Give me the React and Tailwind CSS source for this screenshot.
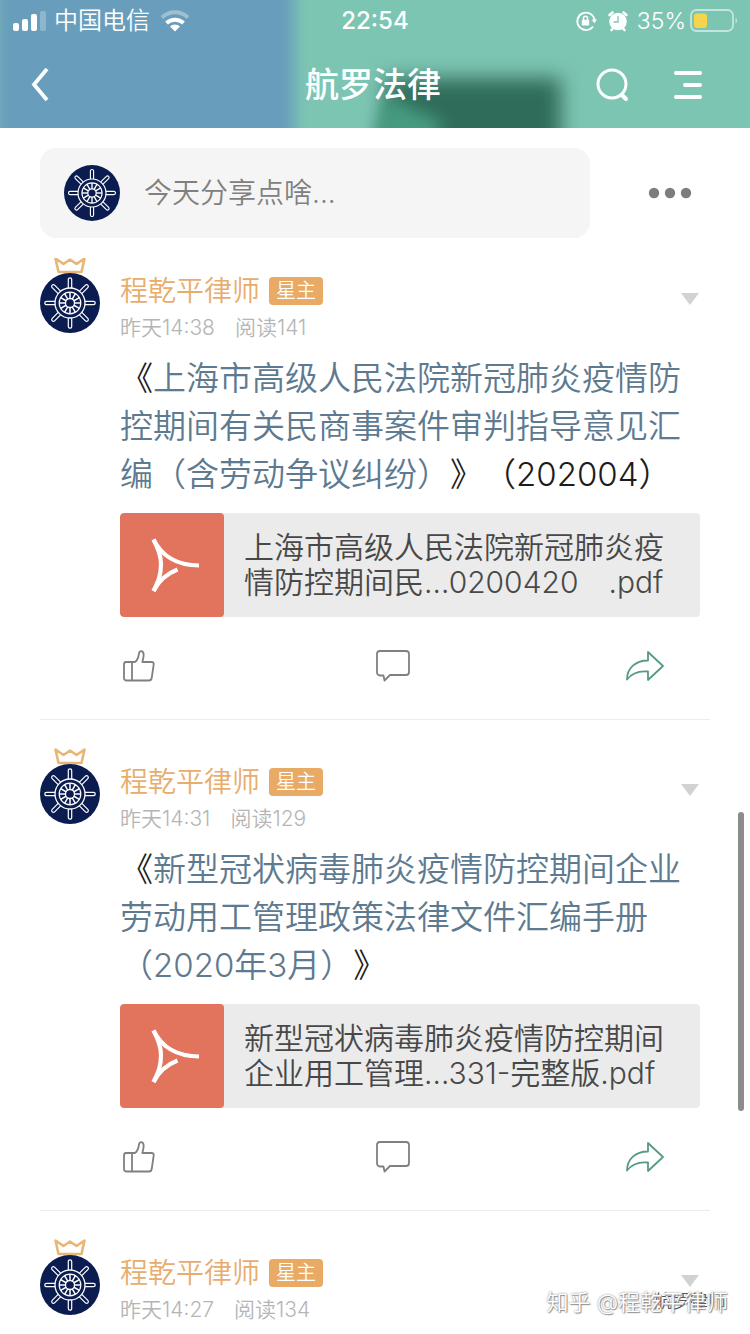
import React from 'react';

const posts = [
  {
    id: 1,
    author: '程乾平律师',
    time: '昨天14:38',
    reads: '阅读141',
    link: '上海市高级人民法院新冠肺炎疫情防控期间有关民商事案件审判指导意见汇编（含劳动争议纠纷）',
    suffix: '（202004）',
    file: ['上海市高级人民法院新冠肺炎疫', '情防控期间民…0200420\u3000.pdf'],
  },
  {
    id: 2,
    author: '程乾平律师',
    time: '昨天14:31',
    reads: '阅读129',
    link: '新型冠状病毒肺炎疫情防控期间企业劳动用工管理政策法律文件汇编手册（2020年3月）',
    suffix: '',
    file: ['新型冠状病毒肺炎疫情防控期间', '企业用工管理…331-完整版.pdf'],
  },
  { id: 3, author: '程乾平律师', time: '昨天14:27', reads: '阅读134' },
];

const Wheel = ({ className }) => (
  <svg viewBox="0 0 60 60" className={className} fill="none" stroke="#fff">
    <circle cx="30" cy="30" r="30" fill="#0b1c50" stroke="none" />
    {[0, 45, 90, 135, 180, 225, 270, 315].map((a) => (
      <path key={a} transform={`rotate(${a} 30 30)`} d="M28.3 15V6.500a1.700 1.700 0 0 1 3.400 0V15" strokeWidth="1.200" />
    ))}
    <circle cx="30" cy="30" r="15" strokeWidth="1.300" />
    <circle cx="30" cy="30" r="10.800" strokeWidth="1.200" />
    <circle cx="30" cy="30" r="4.500" strokeWidth="1.300" />
    {[0, 30, 60, 90, 120, 150, 180, 210, 240, 270, 300, 330].map((a) => (
      <path key={a} transform={`rotate(${a} 30 30)`} d="M30 25.5v-6.3" strokeWidth="1.500" />
    ))}
  </svg>
);

const Crown = () => (
  <svg viewBox="0 0 32 20" className="absolute -top-[17px] left-3.5 h-5 w-8" fill="none" stroke="#eab676" strokeWidth="2.600" strokeLinejoin="round" strokeLinecap="round">
    <path d="M1.500 2.500L4.500 16h23l3-13.500-8 5.500L16 3.500 9.500 8z" />
  </svg>
);

const StatusBar = () => (
  <div className="grid h-[42px] grid-cols-3 items-center px-3 text-[23px] leading-8">
    <div className="flex items-center">
      <svg viewBox="0 0 34 20" className="h-5 w-[34px]" fill="#fff">
        <rect x="1" y="12" width="6" height="8" rx="2" />
        <rect x="10" y="8" width="6" height="12" rx="2" />
        <rect x="19" y="3" width="6" height="17" rx="2" />
        <rect x="28" y="0" width="6" height="20" rx="2" opacity=".25" />
      </svg>
      <span className="ml-2 text-[24px]">中国电信</span>
      <svg viewBox="0 0 30 22" className="ml-2.5 h-[22px] w-[30px]" fill="none" stroke="#fff" strokeWidth="4">
        <path d="M2 7.500a19 19 0 0 1 26 0" opacity=".35" />
        <path d="M6.500 13a12.500 12.500 0 0 1 17 0" />
        <path d="M15 21.500l-5-5a7 7 0 0 1 10 0z" fill="#fff" stroke="none" />
      </svg>
    </div>
    <span className="text-center text-[24px] font-medium">22:54</span>
    <div className="flex items-center justify-end">
      <svg viewBox="0 0 22 22" className="h-[22px] w-[22px]" fill="none" stroke="#fff" strokeWidth="1.800">
        <path d="M18 16.500A8.700 8.700 0 1 1 19.600 10" />
        <path d="M16.700 9.500h5.300l-2.600 3.800z" fill="#fff" stroke="none" />
        <rect x="6.800" y="9.800" width="7.400" height="5.600" rx="1" fill="#fff" stroke="none" />
        <path d="M8.500 10V8.300a2 2 0 0 1 4 0V10" strokeWidth="1.500" />
      </svg>
      <svg viewBox="0 0 22 22" className="ml-2.5 h-[22px] w-[22px]" fill="none" stroke="#fff" strokeLinecap="round">
        <circle cx="11" cy="11.500" r="8.800" fill="#fff" stroke="none" />
        <path d="M2.500 5L5.500 2.500M19.500 5L16.500 2.500M4.500 20l1.800-2M17.500 20l-1.800-2" strokeWidth="2.600" />
        <path d="M11 6.500v5.500H7" stroke="#7cc5b2" strokeWidth="1.300" />
      </svg>
      <span className="ml-2">35%</span>
      <svg viewBox="0 0 48 24" className="ml-1 h-6 w-12">
        <rect x="1" y="1" width="42" height="21" rx="5.500" fill="none" stroke="#fff" strokeWidth="1.800" opacity=".55" />
        <rect x="4" y="4.500" width="13" height="14.500" rx="3" fill="#f5d54b" />
        <path d="M45.500 8.500v6a3.500 3.500 0 0 0 0-6z" fill="#fff" opacity=".5" />
      </svg>
    </div>
  </div>
);

const Header = () => (
  <header className="relative overflow-hidden bg-[#7dc5b3] text-white">
    <div aria-hidden="true" className="absolute inset-0">
      <div className="absolute -left-1 -top-4 h-40 w-[298px] bg-[#689ebb] blur-[7px]" />
      <div className="absolute left-[385px] top-[78px] h-20 w-[176px] bg-[#2f6c59] blur-[10px]" />
      <div className="absolute left-[378px] top-[108px] h-10 w-[60px] rotate-[25deg] bg-[#459b80] blur-[8px]" />
    </div>
    <div className="relative">
      <StatusBar />
      <nav className="grid h-[86px] grid-cols-3 items-center pl-5 pr-[46px]">
        <button aria-label="返回" className="w-10">
          <svg viewBox="0 0 40 40" className="h-10 w-10" fill="none" stroke="#fff" strokeWidth="3.800">
            <path d="M27 4L14 19.500 27 35" />
          </svg>
        </button>
        <h1 className="pl-[22px] text-center text-[34px] font-medium leading-[48px]">航罗法律</h1>
        <div className="flex items-center justify-end gap-[42px]">
          <button aria-label="搜索">
            <svg viewBox="0 0 36 36" className="h-9 w-9" fill="none" stroke="#fff" strokeWidth="3" strokeLinecap="round">
              <circle cx="18" cy="17" r="14" />
              <path d="M28 28l4 4" strokeWidth="4" />
            </svg>
          </button>
          <button aria-label="菜单">
            <svg viewBox="0 0 32 32" className="h-8 w-8" stroke="#fff" strokeWidth="4" strokeLinecap="round">
              <path d="M4 4h24M13 16h15M4 28h24" />
            </svg>
          </button>
        </div>
      </nav>
    </div>
  </header>
);

const Composer = () => (
  <div className="flex items-center justify-between py-5 pl-10 pr-[58px]">
    <label className="flex h-[90px] w-[550px] items-center rounded-2xl bg-[#f5f5f5] pl-6">
      <Wheel className="h-14 w-14" />
      <input
        aria-label="今天分享点啥"
        placeholder="今天分享点啥..."
        className="ml-6 min-w-0 flex-1 bg-transparent text-[28px] leading-10 outline-none placeholder:text-[#808080]"
      />
    </label>
    <button aria-label="更多">
      <svg viewBox="0 0 44 12" className="h-3 w-11" fill="#7d7d7d">
        <circle cx="6" cy="6" r="5.200" />
        <circle cx="22" cy="6" r="5.200" />
        <circle cx="38" cy="6" r="5.200" />
      </svg>
    </button>
  </div>
);

const Attachment = ({ lines }) => (
  <a href="#file" className="mt-[15px] flex h-[104px] items-center overflow-hidden rounded bg-[#ebebeb] text-[#484848]">
    <span className="flex h-[104px] w-[104px] shrink-0 items-center justify-center rounded bg-[#e2735c]">
      <svg viewBox="0 0 104 104" className="h-[104px] w-[104px]" fill="none" stroke="#fff" strokeWidth="4.200" strokeLinejoin="round">
        <path d="M33.500 26.500C38 35 41 42 41 51c0 11-2.500 17-7.500 27" />
        <path d="M33.500 26.500C41 42 56 52.500 79 52.500" />
        <path d="M33.500 78C38 69 46 61 57.500 56.500" />
      </svg>
    </span>
    <span className="ml-5 whitespace-nowrap text-[30px] leading-[35px]">
      {lines.map((line) => (
        <span key={line} className="block">{line}</span>
      ))}
    </span>
  </a>
);

const Actions = () => (
  <div className="mt-[33px] flex h-8 items-center justify-between pr-[35px]">
    <button aria-label="点赞" className="flex w-10 justify-center pr-0.5">
      <svg viewBox="0 0 32 32" className="h-8 w-8" fill="none" stroke="#808080" strokeWidth="1.800" strokeLinejoin="round">
        <path d="M9 12v18.500M3 12h9c3-2 3.500-5 4-8.500.3-2 1.500-2.500 2.500-2.300 3 .8 2.500 5.300.8 10.800H28.500c1.700 0 2.500 1 2.200 2.500l-2 13.500c-.3 1.800-1.200 2.500-2.700 2.500H3.500c-1.500 0-2.500-.8-2.500-2.500V14.500C1 13 1.500 12 3 12z" />
      </svg>
    </button>
    <button aria-label="评论" className="flex w-10 justify-center">
      <svg viewBox="0 0 34 32" className="h-8 w-[34px]" fill="none" stroke="#808080" strokeWidth="1.800" strokeLinejoin="round">
        <path d="M4 1h26a3 3 0 0 1 3 3v18a3 3 0 0 1-3 3H14L8.500 30.500 7.500 25.500H4a3 3 0 0 1-3-3V4a3 3 0 0 1 3-3z" />
      </svg>
    </button>
    <button aria-label="分享" className="flex w-10 justify-center">
      <svg viewBox="0 0 38 32" className="h-8 w-[38px]" fill="none" stroke="#569a85" strokeWidth="1.800" strokeLinejoin="round">
        <path d="M22 2l15 14-15 14v-8.500C12 20.500 6 23 1 29.500 1 18.500 9 10.500 22 10.500z" />
      </svg>
    </button>
  </div>
);

const Post = ({ post }) => (
  <article className="flex items-start gap-5 border-b border-[#ececec] pb-[37px] pt-11 first:pt-[15px] last:border-b-0 last:pb-0">
    <div className="relative shrink-0">
      <Crown />
      <Wheel className="relative h-[60px] w-[60px]" />
    </div>
    <div className="min-w-0 flex-1 pr-2.5">
      <div className="relative flex h-9 items-center text-[28px] leading-9 text-[#e8ad6c]">
        <span>{post.author}</span>
        <span className="ml-[9px] rounded bg-[#e8aa64] px-[7px] text-[20px] leading-7 text-white">星主</span>
        <button aria-label="展开" className="absolute right-px top-5">
          <svg viewBox="0 0 18 12" className="h-3 w-[18px]" fill="#d2d2d2">
            <path d="M0 0h18L9 12z" />
          </svg>
        </button>
      </div>
      <div className="mt-1 flex gap-5 text-[21px] leading-[30px] text-[#b5b5b5]">
        <span>{post.time}</span>
        <span>{post.reads}</span>
      </div>
      {post.link && (
        <>
          <p className="mt-[11px] break-all text-[33px] leading-[48px] text-[#1c1c1c]">
            《<a href="#post" className="text-[#5d7a90]">{post.link}</a>》{post.suffix}
          </p>
          <Attachment lines={post.file} />
          <Actions />
        </>
      )}
    </div>
  </article>
);

export default function App() {
  return (
    <div className="relative h-screen overflow-hidden bg-white font-['Inter','Noto_Sans_CJK_SC',sans-serif] font-[350] [text-spacing-trim:space-all]">
      <Header />
      <Composer />
      <main className="overflow-hidden px-10">
        {posts.map((post) => (
          <Post key={post.id} post={post} />
        ))}
      </main>
      <div aria-hidden="true" className="absolute right-1.5 top-[812px] h-[299px] w-1.5 rounded-full bg-[#8c8c8c]" />
      <div className="absolute bottom-4 right-6 whitespace-nowrap text-[18px] leading-8 text-[#555]">航罗律师</div>
      <div className="absolute bottom-4 right-[22px] whitespace-nowrap text-[22px] leading-8 text-white [text-shadow:0_0_2px_#777,1px_1px_1px_#999]">
        知乎 @程乾平律师
      </div>
    </div>
  );
}
